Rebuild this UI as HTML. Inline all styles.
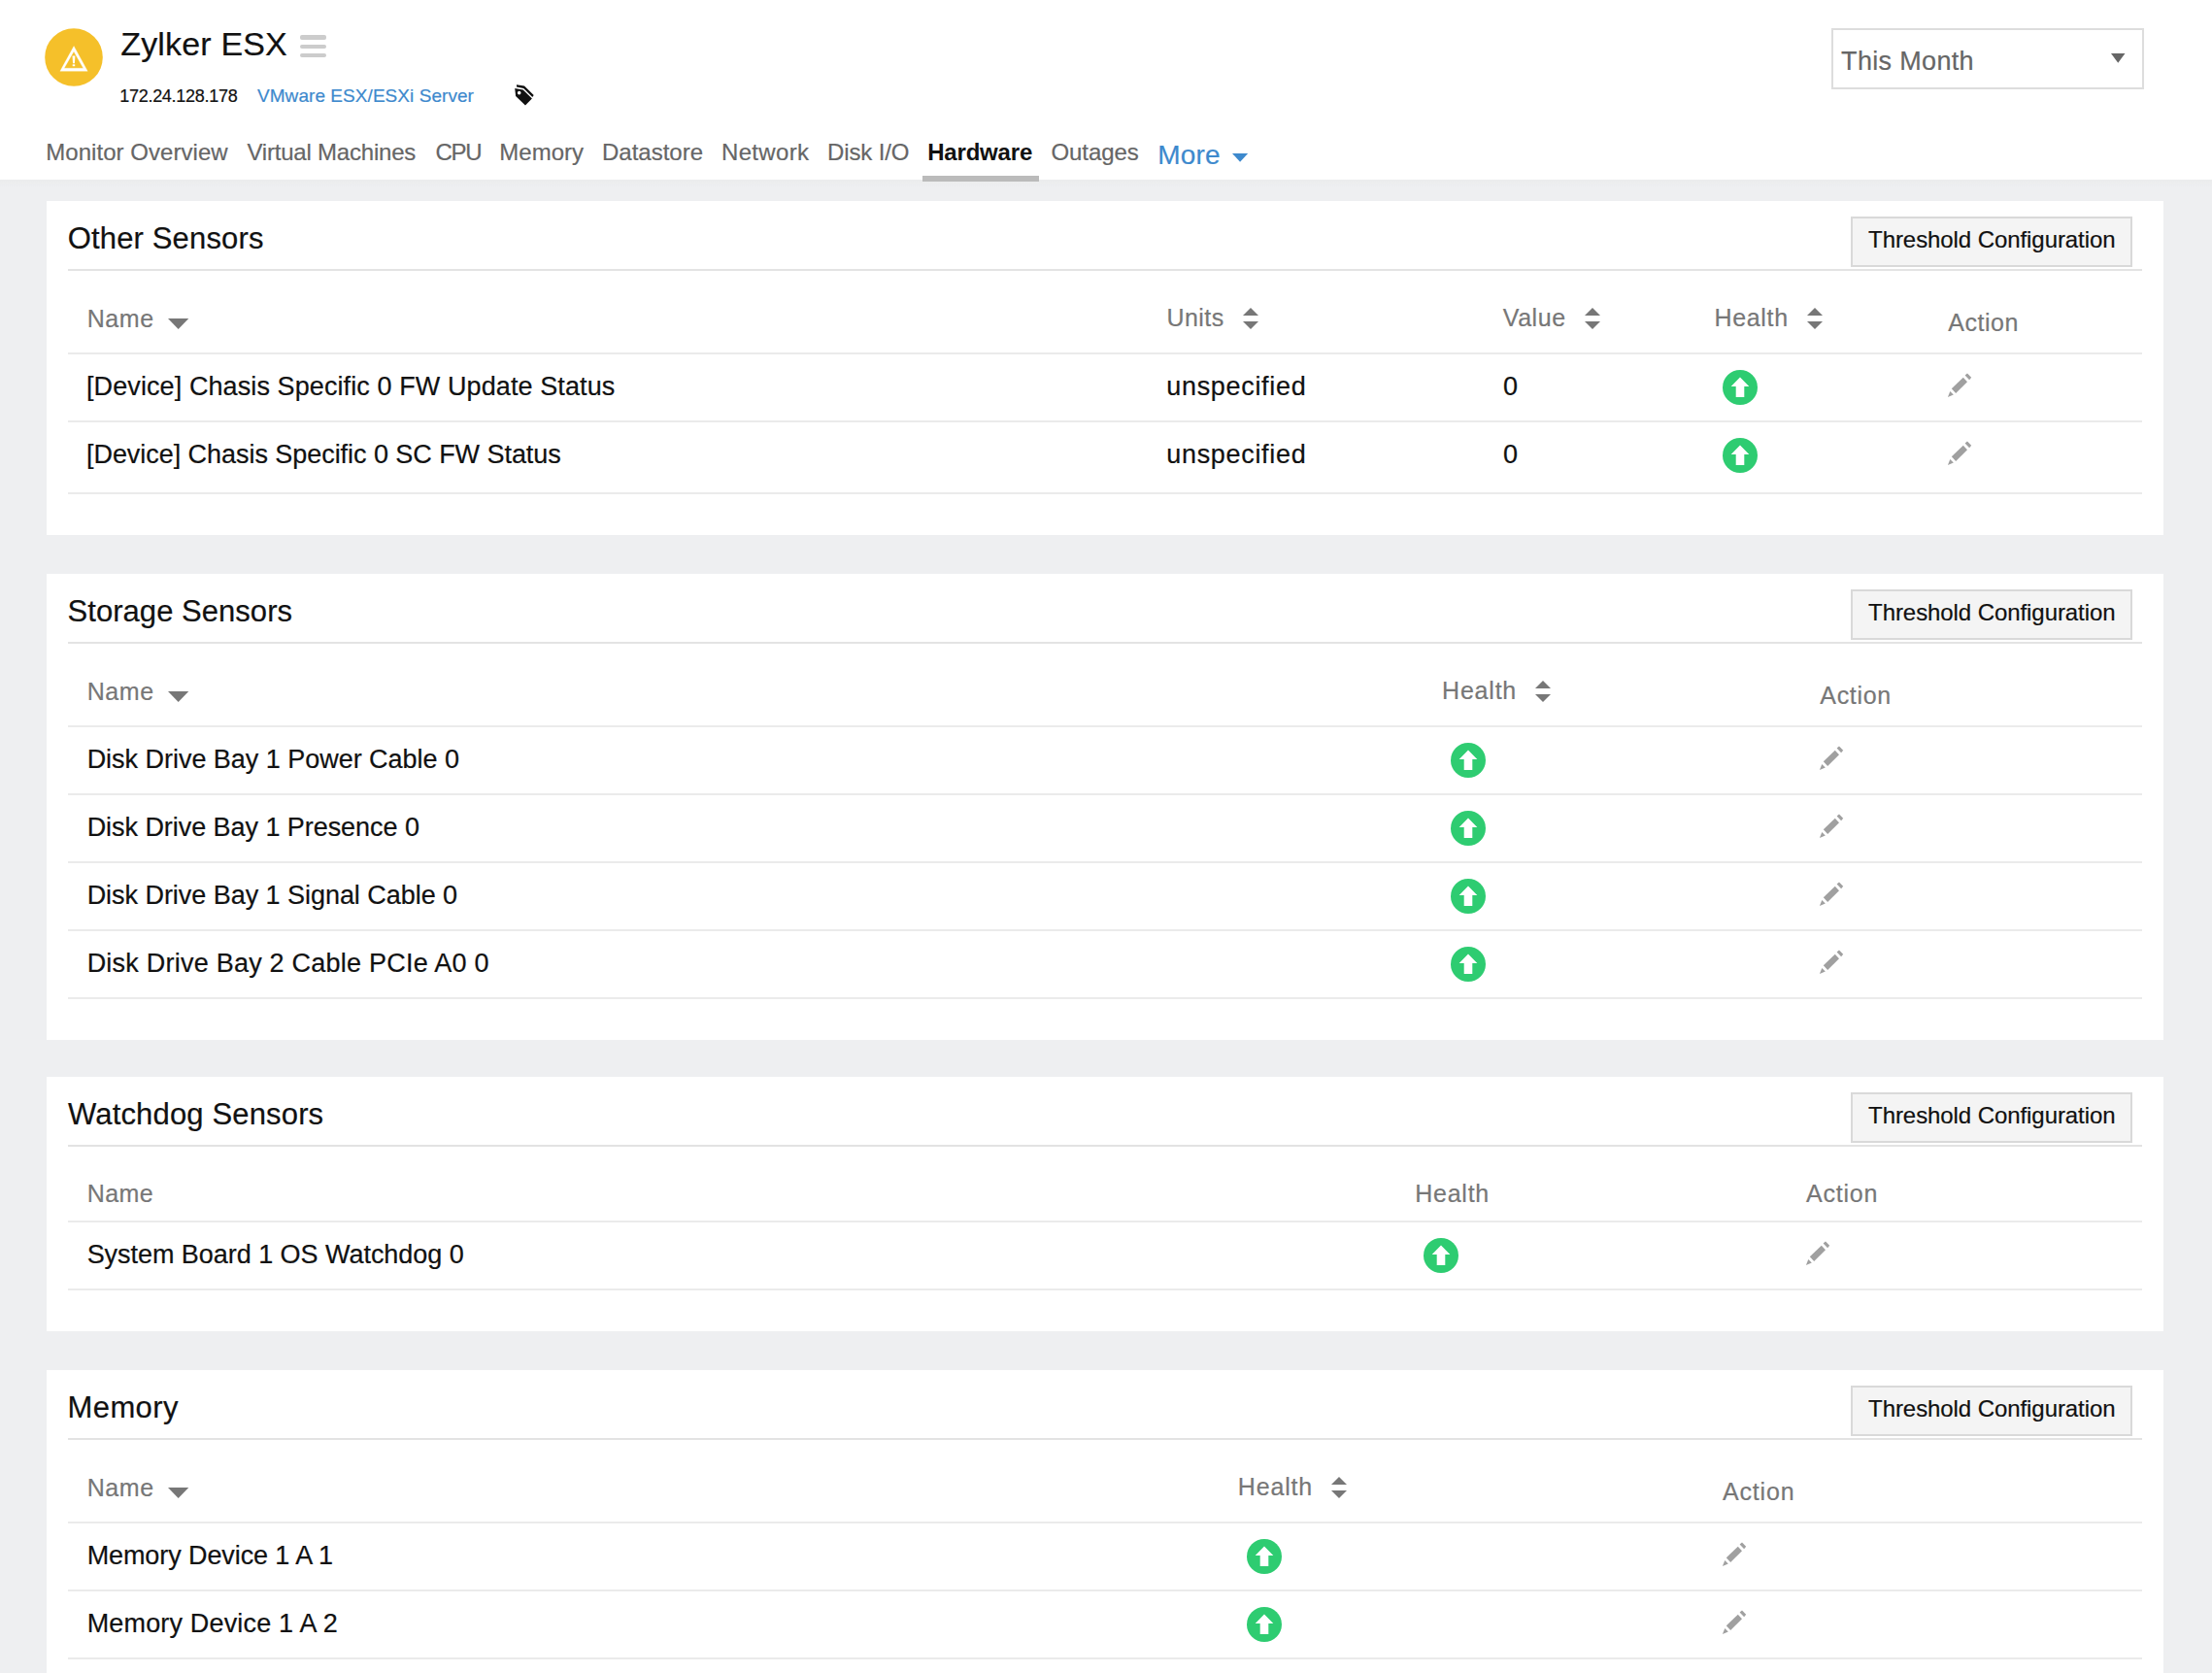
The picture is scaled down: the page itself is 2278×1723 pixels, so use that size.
<!DOCTYPE html>
<html><head><meta charset="utf-8"><title>Zylker ESX - Hardware</title>
<style>
html,body{margin:0;padding:0;background:#fff;width:2278px;height:1723px;overflow:hidden;position:relative;font-family:"Liberation Sans", sans-serif;}
.t{position:absolute;white-space:nowrap;font-family:"Liberation Sans", sans-serif;}
.r{position:absolute;}
.s{position:absolute;display:block;overflow:visible;}
</style></head><body>
<div class="r" style="left:0;top:185px;width:2278px;height:1538px;background:linear-gradient(#ebeced, #eeeff1 9px)"></div>
<svg class="s" style="left:46px;top:28.7px" width="60" height="60" viewBox="0 0 60 60"><circle cx="30" cy="30" r="29.8" fill="#f5c02a"/><path d="M30.05 18.5 L44.2 44.3 L15.9 44.3 Z M30 24.1 L20.1 41.2 L39.8 41.2 Z" fill="#fff" fill-rule="evenodd" stroke="#fff" stroke-width="0.3" stroke-linejoin="round"/><path d="M28.5 28.4 L31.4 28.4 L30.9 36.2 L29 36.2 Z" fill="#fff"/><rect x="28.7" y="37.3" width="2.5" height="1.9" fill="#fff"/></svg>
<div class="t" style="left:124.20px;top:28.11px;font-size:34px;line-height:34px;color:#111;-webkit-text-stroke:0.2px #111;letter-spacing:0.172px;">Zylker ESX</div>
<div class="r" style="left:309px;top:36.4px;width:27.4px;height:4.2px;background:#cccccc;border-radius:2px;"></div>
<div class="r" style="left:309px;top:45.9px;width:27.4px;height:4.2px;background:#cccccc;border-radius:2px;"></div>
<div class="r" style="left:309px;top:55.1px;width:27.4px;height:4.2px;background:#cccccc;border-radius:2px;"></div>
<div class="t" style="left:123.15px;top:90.06px;font-size:18px;line-height:18px;color:#111;-webkit-text-stroke:0.2px #111;letter-spacing:-0.262px;">172.24.128.178</div>
<div class="t" style="left:265.00px;top:89.41px;font-size:19px;line-height:19px;color:#3d89cd;-webkit-text-stroke:0.2px #3d89cd;letter-spacing:0.057px;">VMware ESX/ESXi Server</div>
<svg class="s" style="left:528px;top:84px" width="24" height="26" viewBox="0 0 24 26"><g fill="#111"><path d="M2.2 6.9 L10.7 8.4 L19.9 17.6 L13 24.5 L3.1 14.9 Z M6.7 9.8 a1.8 1.8 0 1 0 0.01 0 Z" fill-rule="evenodd"/><path d="M4 3.2 L12 4.5 L21.7 14 L20.3 15.9 L11.2 6.9 L4 5.6 Z"/></g></svg>
<div class="r" style="left:1886px;top:29px;width:318px;height:59px;border:2px solid #dddddd;background:#fff"></div>
<div class="t" style="left:1896.10px;top:49.94px;font-size:27px;line-height:27px;color:#666;-webkit-text-stroke:0.2px #666;letter-spacing:0.328px;">This Month</div>
<svg class="s" style="left:2173.8px;top:55.1px" width="14.5" height="9.699999999999996" viewBox="0 0 14.5 9.699999999999996"><polygon points="0,0 14.5,0 7.25,9.699999999999996" fill="#666"/></svg>
<div class="t" style="left:47.20px;top:145.48px;font-size:24px;line-height:24px;color:#666;-webkit-text-stroke:0.2px #666;letter-spacing:0.053px;">Monitor Overview</div>
<div class="t" style="left:254.45px;top:145.48px;font-size:24px;line-height:24px;color:#666;-webkit-text-stroke:0.2px #666;letter-spacing:-0.207px;">Virtual Machines</div>
<div class="t" style="left:448.55px;top:145.48px;font-size:24px;line-height:24px;color:#666;-webkit-text-stroke:0.2px #666;letter-spacing:-1.300px;">CPU</div>
<div class="t" style="left:514.20px;top:145.48px;font-size:24px;line-height:24px;color:#666;-webkit-text-stroke:0.2px #666;letter-spacing:0.050px;">Memory</div>
<div class="t" style="left:620.00px;top:145.48px;font-size:24px;line-height:24px;color:#666;-webkit-text-stroke:0.2px #666;letter-spacing:0.000px;">Datastore</div>
<div class="t" style="left:743.00px;top:145.48px;font-size:24px;line-height:24px;color:#666;-webkit-text-stroke:0.2px #666;letter-spacing:0.333px;">Network</div>
<div class="t" style="left:852.00px;top:145.48px;font-size:24px;line-height:24px;color:#666;-webkit-text-stroke:0.2px #666;letter-spacing:-0.121px;">Disk I/O</div>
<div class="t" style="left:1082.50px;top:145.48px;font-size:24px;line-height:24px;color:#666;-webkit-text-stroke:0.2px #666;letter-spacing:-0.083px;">Outages</div>
<div class="t" style="left:955.20px;top:145.48px;font-size:24px;line-height:24px;color:#111;font-weight:bold;letter-spacing:-0.186px;">Hardware</div>
<div class="t" style="left:1192.25px;top:146.19px;font-size:28px;line-height:28px;color:#3d89cd;-webkit-text-stroke:0.2px #3d89cd;letter-spacing:0.217px;">More</div>
<svg class="s" style="left:1268.8px;top:158.2px" width="16.200000000000045" height="8.700000000000017" viewBox="0 0 16.200000000000045 8.700000000000017"><polygon points="0,0 16.200000000000045,0 8.100000000000023,8.700000000000017" fill="#3d89cd"/></svg>
<div class="r" style="left:950px;top:181px;width:120px;height:6px;background:#bbbbbb;"></div>
<div class="r" style="left:48px;top:207px;width:2180px;height:344px;background:#fff;"></div>
<div class="t" style="left:69.70px;top:229.78px;font-size:31px;line-height:31px;color:#111;-webkit-text-stroke:0.2px #111;letter-spacing:0.158px;">Other Sensors</div>
<div class="r" style="left:1906px;top:223px;width:286px;height:48px;border:2px solid #d9d9d9;background:#f4f4f4"></div>
<div class="t" style="left:1924.10px;top:235.18px;font-size:24px;line-height:24px;color:#111;-webkit-text-stroke:0.2px #111;letter-spacing:-0.077px;">Threshold Configuration</div>
<div class="r" style="left:70px;top:277px;width:2136px;height:2px;background:#e3e3e3;"></div>
<div class="t" style="left:89.70px;top:316.13px;font-size:25px;line-height:25px;color:#777;-webkit-text-stroke:0.2px #777;letter-spacing:0.567px;">Name</div>
<div class="t" style="left:1201.60px;top:314.93px;font-size:25px;line-height:25px;color:#777;-webkit-text-stroke:0.2px #777;letter-spacing:0.400px;">Units</div>
<div class="t" style="left:1547.75px;top:314.93px;font-size:25px;line-height:25px;color:#777;-webkit-text-stroke:0.2px #777;letter-spacing:0.562px;">Value</div>
<div class="t" style="left:1765.40px;top:314.93px;font-size:25px;line-height:25px;color:#777;-webkit-text-stroke:0.2px #777;letter-spacing:0.700px;">Health</div>
<div class="t" style="left:2006.30px;top:319.73px;font-size:25px;line-height:25px;color:#777;-webkit-text-stroke:0.2px #777;letter-spacing:0.530px;">Action</div>
<div class="r" style="left:70px;top:363px;width:2136px;height:2px;background:#ebebeb;"></div>
<div class="t" style="left:89.00px;top:385.22px;font-size:27px;line-height:27px;color:#111;-webkit-text-stroke:0.2px #111;letter-spacing:0.096px;">[Device] Chasis Specific 0 FW Update Status</div>
<div class="t" style="left:1201.25px;top:385.22px;font-size:27px;line-height:27px;color:#111;-webkit-text-stroke:0.2px #111;letter-spacing:0.680px;">unspecified</div>
<div class="t" style="left:1548.00px;top:385.22px;font-size:27px;line-height:27px;color:#111;-webkit-text-stroke:0.2px #111;">0</div>
<svg class="s" style="left:1774px;top:381px" width="36" height="36" viewBox="0 0 36 36"><circle cx="18" cy="18" r="18" fill="#2ecc71"/><polygon points="18,7.6 27.3,17 22.3,17 22.3,28 13.7,28 13.7,17 8.7,17" fill="#fff"/></svg>
<svg class="s" style="left:2000.0px;top:380px" width="32" height="32" viewBox="0 0 32 32"><g fill="#a0a0a0"><polygon points="9.8,20.3 21.8,8.7 26,13.2 14.2,25"/><polygon points="8.3,23 11.8,26.4 5.9,28.9"/><polygon points="23.6,6.6 26,4.6 30.2,8.8 28.1,11.3"/></g></svg>
<div class="r" style="left:70px;top:433px;width:2136px;height:2px;background:#ebebeb;"></div>
<div class="t" style="left:89.00px;top:455.22px;font-size:27px;line-height:27px;color:#111;-webkit-text-stroke:0.2px #111;letter-spacing:-0.049px;">[Device] Chasis Specific 0 SC FW Status</div>
<div class="t" style="left:1201.25px;top:455.22px;font-size:27px;line-height:27px;color:#111;-webkit-text-stroke:0.2px #111;letter-spacing:0.680px;">unspecified</div>
<div class="t" style="left:1548.00px;top:455.22px;font-size:27px;line-height:27px;color:#111;-webkit-text-stroke:0.2px #111;">0</div>
<svg class="s" style="left:1774px;top:451px" width="36" height="36" viewBox="0 0 36 36"><circle cx="18" cy="18" r="18" fill="#2ecc71"/><polygon points="18,7.6 27.3,17 22.3,17 22.3,28 13.7,28 13.7,17 8.7,17" fill="#fff"/></svg>
<svg class="s" style="left:2000.0px;top:450px" width="32" height="32" viewBox="0 0 32 32"><g fill="#a0a0a0"><polygon points="9.8,20.3 21.8,8.7 26,13.2 14.2,25"/><polygon points="8.3,23 11.8,26.4 5.9,28.9"/><polygon points="23.6,6.6 26,4.6 30.2,8.8 28.1,11.3"/></g></svg>
<div class="r" style="left:70px;top:507px;width:2136px;height:2px;background:#ebebeb;"></div>
<svg class="s" style="left:172.9px;top:327.8px" width="21.299999999999983" height="11.099999999999966" viewBox="0 0 21.299999999999983 11.099999999999966"><polygon points="0,0 21.299999999999983,0 10.649999999999991,11.099999999999966" fill="#777"/></svg>
<svg class="s" style="left:1280.3px;top:317px" width="16.0" height="8" viewBox="0 0 16.0 8"><polygon points="0,8 16.0,8 8.0,0" fill="#777"/></svg>
<svg class="s" style="left:1280.3px;top:331px" width="16.0" height="8" viewBox="0 0 16.0 8"><polygon points="0,0 16.0,0 8.0,8" fill="#777"/></svg>
<svg class="s" style="left:1632px;top:317px" width="16" height="8" viewBox="0 0 16 8"><polygon points="0,8 16,8 8.0,0" fill="#777"/></svg>
<svg class="s" style="left:1632px;top:331px" width="16" height="8" viewBox="0 0 16 8"><polygon points="0,0 16,0 8.0,8" fill="#777"/></svg>
<svg class="s" style="left:1860.8px;top:317px" width="16.0" height="8" viewBox="0 0 16.0 8"><polygon points="0,8 16.0,8 8.0,0" fill="#777"/></svg>
<svg class="s" style="left:1860.8px;top:331px" width="16.0" height="8" viewBox="0 0 16.0 8"><polygon points="0,0 16.0,0 8.0,8" fill="#777"/></svg>
<div class="r" style="left:48px;top:591px;width:2180px;height:480px;background:#fff;"></div>
<div class="t" style="left:69.60px;top:613.78px;font-size:31px;line-height:31px;color:#111;-webkit-text-stroke:0.2px #111;letter-spacing:0.036px;">Storage Sensors</div>
<div class="r" style="left:1906px;top:607px;width:286px;height:48px;border:2px solid #d9d9d9;background:#f4f4f4"></div>
<div class="t" style="left:1924.10px;top:619.18px;font-size:24px;line-height:24px;color:#111;-webkit-text-stroke:0.2px #111;letter-spacing:-0.077px;">Threshold Configuration</div>
<div class="r" style="left:70px;top:661px;width:2136px;height:2px;background:#e3e3e3;"></div>
<div class="t" style="left:89.70px;top:700.13px;font-size:25px;line-height:25px;color:#777;-webkit-text-stroke:0.2px #777;letter-spacing:0.567px;">Name</div>
<div class="t" style="left:1485.10px;top:698.93px;font-size:25px;line-height:25px;color:#777;-webkit-text-stroke:0.2px #777;letter-spacing:0.780px;">Health</div>
<div class="t" style="left:1874.30px;top:703.73px;font-size:25px;line-height:25px;color:#777;-webkit-text-stroke:0.2px #777;letter-spacing:0.690px;">Action</div>
<div class="r" style="left:70px;top:747px;width:2136px;height:2px;background:#ebebeb;"></div>
<div class="t" style="left:89.65px;top:769.22px;font-size:27px;line-height:27px;color:#111;-webkit-text-stroke:0.2px #111;letter-spacing:-0.028px;">Disk Drive Bay 1 Power Cable 0</div>
<svg class="s" style="left:1493.9px;top:765px" width="36" height="36" viewBox="0 0 36 36"><circle cx="18" cy="18" r="18" fill="#2ecc71"/><polygon points="18,7.6 27.3,17 22.3,17 22.3,28 13.7,28 13.7,17 8.7,17" fill="#fff"/></svg>
<svg class="s" style="left:1867.8px;top:764px" width="32" height="32" viewBox="0 0 32 32"><g fill="#a0a0a0"><polygon points="9.8,20.3 21.8,8.7 26,13.2 14.2,25"/><polygon points="8.3,23 11.8,26.4 5.9,28.9"/><polygon points="23.6,6.6 26,4.6 30.2,8.8 28.1,11.3"/></g></svg>
<div class="r" style="left:70px;top:817px;width:2136px;height:2px;background:#ebebeb;"></div>
<div class="t" style="left:89.65px;top:839.22px;font-size:27px;line-height:27px;color:#111;-webkit-text-stroke:0.2px #111;letter-spacing:-0.052px;">Disk Drive Bay 1 Presence 0</div>
<svg class="s" style="left:1493.9px;top:835px" width="36" height="36" viewBox="0 0 36 36"><circle cx="18" cy="18" r="18" fill="#2ecc71"/><polygon points="18,7.6 27.3,17 22.3,17 22.3,28 13.7,28 13.7,17 8.7,17" fill="#fff"/></svg>
<svg class="s" style="left:1867.8px;top:834px" width="32" height="32" viewBox="0 0 32 32"><g fill="#a0a0a0"><polygon points="9.8,20.3 21.8,8.7 26,13.2 14.2,25"/><polygon points="8.3,23 11.8,26.4 5.9,28.9"/><polygon points="23.6,6.6 26,4.6 30.2,8.8 28.1,11.3"/></g></svg>
<div class="r" style="left:70px;top:887px;width:2136px;height:2px;background:#ebebeb;"></div>
<div class="t" style="left:89.65px;top:909.22px;font-size:27px;line-height:27px;color:#111;-webkit-text-stroke:0.2px #111;letter-spacing:-0.040px;">Disk Drive Bay 1 Signal Cable 0</div>
<svg class="s" style="left:1493.9px;top:905px" width="36" height="36" viewBox="0 0 36 36"><circle cx="18" cy="18" r="18" fill="#2ecc71"/><polygon points="18,7.6 27.3,17 22.3,17 22.3,28 13.7,28 13.7,17 8.7,17" fill="#fff"/></svg>
<svg class="s" style="left:1867.8px;top:904px" width="32" height="32" viewBox="0 0 32 32"><g fill="#a0a0a0"><polygon points="9.8,20.3 21.8,8.7 26,13.2 14.2,25"/><polygon points="8.3,23 11.8,26.4 5.9,28.9"/><polygon points="23.6,6.6 26,4.6 30.2,8.8 28.1,11.3"/></g></svg>
<div class="r" style="left:70px;top:957px;width:2136px;height:2px;background:#ebebeb;"></div>
<div class="t" style="left:89.65px;top:979.22px;font-size:27px;line-height:27px;color:#111;-webkit-text-stroke:0.2px #111;letter-spacing:0.229px;">Disk Drive Bay 2 Cable PCIe A0 0</div>
<svg class="s" style="left:1493.9px;top:975px" width="36" height="36" viewBox="0 0 36 36"><circle cx="18" cy="18" r="18" fill="#2ecc71"/><polygon points="18,7.6 27.3,17 22.3,17 22.3,28 13.7,28 13.7,17 8.7,17" fill="#fff"/></svg>
<svg class="s" style="left:1867.8px;top:974px" width="32" height="32" viewBox="0 0 32 32"><g fill="#a0a0a0"><polygon points="9.8,20.3 21.8,8.7 26,13.2 14.2,25"/><polygon points="8.3,23 11.8,26.4 5.9,28.9"/><polygon points="23.6,6.6 26,4.6 30.2,8.8 28.1,11.3"/></g></svg>
<div class="r" style="left:70px;top:1027px;width:2136px;height:2px;background:#ebebeb;"></div>
<svg class="s" style="left:172.9px;top:711.8px" width="21.299999999999983" height="11.100000000000023" viewBox="0 0 21.299999999999983 11.100000000000023"><polygon points="0,0 21.299999999999983,0 10.649999999999991,11.100000000000023" fill="#777"/></svg>
<svg class="s" style="left:1581px;top:701px" width="16" height="8" viewBox="0 0 16 8"><polygon points="0,8 16,8 8.0,0" fill="#777"/></svg>
<svg class="s" style="left:1581px;top:715px" width="16" height="8" viewBox="0 0 16 8"><polygon points="0,0 16,0 8.0,8" fill="#777"/></svg>
<div class="r" style="left:48px;top:1109px;width:2180px;height:262px;background:#fff;"></div>
<div class="t" style="left:70.05px;top:1131.78px;font-size:31px;line-height:31px;color:#111;-webkit-text-stroke:0.2px #111;letter-spacing:0.153px;">Watchdog Sensors</div>
<div class="r" style="left:1906px;top:1125px;width:286px;height:48px;border:2px solid #d9d9d9;background:#f4f4f4"></div>
<div class="t" style="left:1924.10px;top:1137.18px;font-size:24px;line-height:24px;color:#111;-webkit-text-stroke:0.2px #111;letter-spacing:-0.077px;">Threshold Configuration</div>
<div class="r" style="left:70px;top:1179px;width:2136px;height:2px;background:#e3e3e3;"></div>
<div class="t" style="left:89.70px;top:1217.43px;font-size:25px;line-height:25px;color:#777;-webkit-text-stroke:0.2px #777;letter-spacing:0.467px;">Name</div>
<div class="t" style="left:1457.20px;top:1217.43px;font-size:25px;line-height:25px;color:#777;-webkit-text-stroke:0.2px #777;letter-spacing:0.760px;">Health</div>
<div class="t" style="left:1860.00px;top:1217.43px;font-size:25px;line-height:25px;color:#777;-webkit-text-stroke:0.2px #777;letter-spacing:0.770px;">Action</div>
<div class="r" style="left:70px;top:1257px;width:2136px;height:2px;background:#ebebeb;"></div>
<div class="t" style="left:89.65px;top:1279.22px;font-size:27px;line-height:27px;color:#111;-webkit-text-stroke:0.2px #111;letter-spacing:-0.041px;">System Board 1 OS Watchdog 0</div>
<svg class="s" style="left:1466px;top:1275px" width="36" height="36" viewBox="0 0 36 36"><circle cx="18" cy="18" r="18" fill="#2ecc71"/><polygon points="18,7.6 27.3,17 22.3,17 22.3,28 13.7,28 13.7,17 8.7,17" fill="#fff"/></svg>
<svg class="s" style="left:1853.8999999999999px;top:1274px" width="32" height="32" viewBox="0 0 32 32"><g fill="#a0a0a0"><polygon points="9.8,20.3 21.8,8.7 26,13.2 14.2,25"/><polygon points="8.3,23 11.8,26.4 5.9,28.9"/><polygon points="23.6,6.6 26,4.6 30.2,8.8 28.1,11.3"/></g></svg>
<div class="r" style="left:70px;top:1327px;width:2136px;height:2px;background:#ebebeb;"></div>
<div class="r" style="left:48px;top:1411px;width:2180px;height:389px;background:#fff;"></div>
<div class="t" style="left:69.60px;top:1433.78px;font-size:31px;line-height:31px;color:#111;-webkit-text-stroke:0.2px #111;letter-spacing:0.380px;">Memory</div>
<div class="r" style="left:1906px;top:1427px;width:286px;height:48px;border:2px solid #d9d9d9;background:#f4f4f4"></div>
<div class="t" style="left:1924.10px;top:1439.18px;font-size:24px;line-height:24px;color:#111;-webkit-text-stroke:0.2px #111;letter-spacing:-0.077px;">Threshold Configuration</div>
<div class="r" style="left:70px;top:1481px;width:2136px;height:2px;background:#e3e3e3;"></div>
<div class="t" style="left:89.70px;top:1520.13px;font-size:25px;line-height:25px;color:#777;-webkit-text-stroke:0.2px #777;letter-spacing:0.567px;">Name</div>
<div class="t" style="left:1274.80px;top:1518.93px;font-size:25px;line-height:25px;color:#777;-webkit-text-stroke:0.2px #777;letter-spacing:0.840px;">Health</div>
<div class="t" style="left:1774.00px;top:1523.73px;font-size:25px;line-height:25px;color:#777;-webkit-text-stroke:0.2px #777;letter-spacing:0.810px;">Action</div>
<div class="r" style="left:70px;top:1567px;width:2136px;height:2px;background:#ebebeb;"></div>
<div class="t" style="left:89.65px;top:1589.22px;font-size:27px;line-height:27px;color:#111;-webkit-text-stroke:0.2px #111;letter-spacing:-0.094px;">Memory Device 1 A 1</div>
<svg class="s" style="left:1283.9px;top:1585px" width="36" height="36" viewBox="0 0 36 36"><circle cx="18" cy="18" r="18" fill="#2ecc71"/><polygon points="18,7.6 27.3,17 22.3,17 22.3,28 13.7,28 13.7,17 8.7,17" fill="#fff"/></svg>
<svg class="s" style="left:1767.5px;top:1584px" width="32" height="32" viewBox="0 0 32 32"><g fill="#a0a0a0"><polygon points="9.8,20.3 21.8,8.7 26,13.2 14.2,25"/><polygon points="8.3,23 11.8,26.4 5.9,28.9"/><polygon points="23.6,6.6 26,4.6 30.2,8.8 28.1,11.3"/></g></svg>
<div class="r" style="left:70px;top:1637px;width:2136px;height:2px;background:#ebebeb;"></div>
<div class="t" style="left:89.65px;top:1659.22px;font-size:27px;line-height:27px;color:#111;-webkit-text-stroke:0.2px #111;letter-spacing:0.167px;">Memory Device 1 A 2</div>
<svg class="s" style="left:1283.9px;top:1655px" width="36" height="36" viewBox="0 0 36 36"><circle cx="18" cy="18" r="18" fill="#2ecc71"/><polygon points="18,7.6 27.3,17 22.3,17 22.3,28 13.7,28 13.7,17 8.7,17" fill="#fff"/></svg>
<svg class="s" style="left:1767.5px;top:1654px" width="32" height="32" viewBox="0 0 32 32"><g fill="#a0a0a0"><polygon points="9.8,20.3 21.8,8.7 26,13.2 14.2,25"/><polygon points="8.3,23 11.8,26.4 5.9,28.9"/><polygon points="23.6,6.6 26,4.6 30.2,8.8 28.1,11.3"/></g></svg>
<div class="r" style="left:70px;top:1707px;width:2136px;height:2px;background:#ebebeb;"></div>
<div class="t" style="left:89.65px;top:1729.22px;font-size:27px;line-height:27px;color:#111;-webkit-text-stroke:0.2px #111;letter-spacing:0.167px;">Memory Device 1 A 3</div>
<svg class="s" style="left:1283.9px;top:1725px" width="36" height="36" viewBox="0 0 36 36"><circle cx="18" cy="18" r="18" fill="#2ecc71"/><polygon points="18,7.6 27.3,17 22.3,17 22.3,28 13.7,28 13.7,17 8.7,17" fill="#fff"/></svg>
<svg class="s" style="left:1767.5px;top:1724px" width="32" height="32" viewBox="0 0 32 32"><g fill="#a0a0a0"><polygon points="9.8,20.3 21.8,8.7 26,13.2 14.2,25"/><polygon points="8.3,23 11.8,26.4 5.9,28.9"/><polygon points="23.6,6.6 26,4.6 30.2,8.8 28.1,11.3"/></g></svg>
<div class="r" style="left:70px;top:1777px;width:2136px;height:2px;background:#ebebeb;"></div>
<svg class="s" style="left:172.9px;top:1531.8px" width="21.299999999999983" height="11.100000000000136" viewBox="0 0 21.299999999999983 11.100000000000136"><polygon points="0,0 21.299999999999983,0 10.649999999999991,11.100000000000136" fill="#777"/></svg>
<svg class="s" style="left:1370.7px;top:1521px" width="16.0" height="8" viewBox="0 0 16.0 8"><polygon points="0,8 16.0,8 8.0,0" fill="#777"/></svg>
<svg class="s" style="left:1370.7px;top:1535px" width="16.0" height="8" viewBox="0 0 16.0 8"><polygon points="0,0 16.0,0 8.0,8" fill="#777"/></svg>
</body></html>
